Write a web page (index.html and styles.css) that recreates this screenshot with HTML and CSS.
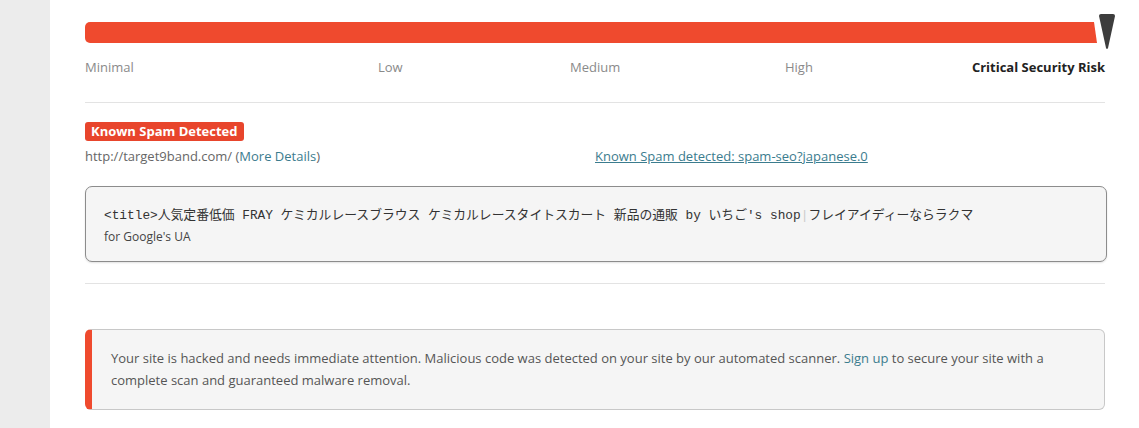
FILE: index.html
```
<html>
  <head>
    <link rel="stylesheet" href="styles.css">
    <title>Site Check</title>
  </head>
  <body>
    <div class="page">
      <div class="sidebar"></div>
      <div class="main">
        <div class="meter">
          <div class="meter-bar"></div>
          <svg class="needle" width="18" height="36" viewBox="0 0 18 36">
            <path d="M1 2 Q1 0 3 0 L15 0 Q17 0 17 2 L10 34 Q9 36 8 34 Z" fill="#3d3d3d"/>
          </svg>
        </div>
        <div class="levels">
          <span class="lvl-min">Minimal</span>
          <span class="lvl-low">Low</span>
          <span class="lvl-med">Medium</span>
          <span class="lvl-high">High</span>
          <span class="lvl-crit">Critical Security Risk</span>
        </div>

        <hr>

        <div class="badge">Known Spam Detected</div>
        <div class="finding">
          <div>http://target9band.com/ (<a href="#">More Details</a>)</div>
          <div><a href="#" class="under">Known Spam detected: spam-seo?japanese.0</a></div>
        </div>

        <div class="code-box">
          <div class="code">&lt;title&gt;人気定番低価 FRAY ケミカルレースブラウス ケミカルレースタイトスカート 新品の通販 by いちご's shop<span class="pipe">|</span>フレイアイディーならラクマ</div>
          <div class="ua">for Google's UA</div>
        </div>

        <hr class="after-code">

        <div class="alert">
          Your site is hacked and needs immediate attention. Malicious code was detected on your site by our automated scanner. <a href="#">Sign up</a> to secure your site with a complete scan and guaranteed malware removal.
        </div>
      </div>
    </div>
  </body>
</html>
```
FILE: styles.css
```
body {
  margin: 0;
  font-family: "Open Sans", "Noto Sans", sans-serif;
  font-size: 13px;
  color: #555;
  background: #fff;
}

a {
  color: #3b7c8e;
  text-decoration: none;
}

a.under {
  text-decoration: underline;
}

.page {
  display: flex;
  min-height: 428px;
}

.sidebar {
  width: 50px;
  background: #ececec;
  flex-shrink: 0;
}

.main {
  flex: 1;
  padding: 0 34px 0 35px;
}

.meter {
  position: relative;
  margin-top: 22px;
  height: 21px;
}

.meter-bar {
  height: 21px;
  margin-right: 8px;
  background: #ef4a2e;
  border-radius: 5px 0 0 5px;
  clip-path: polygon(0 0, calc(100% - 3px) 0, 100% 100%, 0 100%);
}

.needle {
  position: absolute;
  right: -11px;
  top: -8px;
}

.levels {
  position: relative;
  height: 20px;
  margin-top: 15px;
  color: #8a8a8a;
}

.levels span {
  position: absolute;
  top: 0;
}

.lvl-min { left: 0; }
.lvl-low { left: 293px; }
.lvl-med { left: 485px; }
.lvl-high { left: 700px; }
.lvl-crit {
  right: 0;
  color: #222;
  font-weight: 700;
}

hr {
  border: 0;
  border-top: 1px solid #e3e3e3;
  margin: 0;
}

.levels + hr {
  margin-top: 24px;
}

.badge {
  width: fit-content;
  margin-top: 19px;
  background: #e8452c;
  color: #fff;
  font-weight: 700;
  font-size: 13px;
  line-height: 19px;
  padding: 0 6px;
  border-radius: 3px;
}

.finding {
  display: grid;
  grid-template-columns: 1fr 1fr;
  color: #666;
  margin-top: 6px;
  line-height: 18px;
}

.code-box {
  margin-top: 21px;
  margin-right: -2px;
  background: #f5f5f5;
  border: 1px solid #8c8c8c;
  border-radius: 7px;
  box-shadow: 0 1px 2px rgba(0, 0, 0, 0.12);
  padding: 20px 18px 16px;
}

.code {
  font-family: Consolas, "Liberation Mono", "Noto Sans CJK JP", monospace;
  font-size: 12.8px;
  color: #333;
  line-height: 18px;
  white-space: nowrap;
}

.pipe {
  color: #ccc;
}

.ua {
  font-size: 12px;
  line-height: 16px;
  color: #444;
  margin-top: 4px;
}

hr.after-code {
  margin-top: 21px;
}

.alert {
  margin-top: 45px;
  background: #f5f5f5;
  border: 1px solid #c8c8c8;
  border-left: 7px solid #ef4a2e;
  border-radius: 6px;
  padding: 17px 20px 18px 19px;
  line-height: 22px;
  color: #555;
}
```
